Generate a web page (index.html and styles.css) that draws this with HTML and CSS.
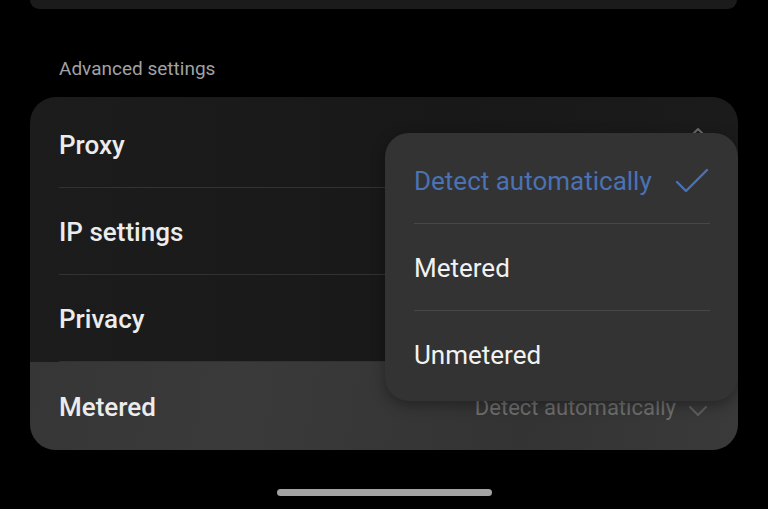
FILE: index.html
```html
<!DOCTYPE html>
<html lang="en">
<head>
    <meta charset="UTF-8">
    <meta name="viewport" content="width=device-width, initial-scale=1.0">
    <title>Advanced settings</title>
    <link rel="stylesheet" href="styles.css">
</head>
<body>

    <div class="screen">
        <!-- bottom of the card above -->
        <div class="top-card"></div>

        <div class="section-title">Advanced settings</div>

        <div class="card-wrap">
            <div class="card">
                <div class="row first">
                    <div class="row-inner">
                        <span class="row-title">Proxy</span>
                        <svg class="chevron" width="20" height="12" viewBox="0 0 20 12">
                            <path d="M2 10 L10 2 L18 10" fill="none" stroke="#6a6a6a" stroke-width="2" stroke-linecap="round" stroke-linejoin="round"/>
                        </svg>
                    </div>
                </div>
                <div class="row">
                    <div class="row-inner">
                        <span class="row-title">IP settings</span>
                    </div>
                </div>
                <div class="row">
                    <div class="row-inner">
                        <span class="row-title">Privacy</span>
                    </div>
                </div>
                <div class="row active last">
                    <div class="row-inner">
                        <span class="row-title">Metered</span>
                        <span class="row-value">Detect automatically</span>
                        <svg class="chevron" width="20" height="12" viewBox="0 0 20 12">
                            <path d="M2 2 L10 10 L18 2" fill="none" stroke="#5e5e5e" stroke-width="2" stroke-linecap="round" stroke-linejoin="round"/>
                        </svg>
                    </div>
                </div>
            </div>

            <!-- dropdown menu -->
            <div class="menu">
                <div class="menu-item selected">
                    <span>Detect automatically</span>
                    <svg width="34" height="26" viewBox="0 0 34 26">
                        <path d="M2 14 L11 23 L32 2" fill="none" stroke="#4a72b4" stroke-width="2.4" stroke-linecap="round" stroke-linejoin="round"/>
                    </svg>
                </div>
                <div class="menu-item">
                    <span>Metered</span>
                </div>
                <div class="menu-item last">
                    <span>Unmetered</span>
                </div>
            </div>
        </div>

        <div class="home-bar"></div>
    </div>

</body>
</html>
```

FILE: styles.css
```css
body {
    margin: 0;
    padding: 0;
    background-color: #000;
    font-family: Roboto, "Noto Sans", sans-serif;
}
.screen {
    width: 768px;
    height: 509px;
    padding: 0 30px;
    box-sizing: border-box;
    overflow: hidden;
}
.top-card {
    height: 9px;
    margin-right: 1px;
    background-color: #1b1b1b;
    border-radius: 0 0 26px 26px;
}
.section-title {
    padding: 47px 0 0 29px;
    height: 41px;
    font-size: 19px;
    line-height: 25px;
    color: #a2a2a2;
}
.card-wrap {
    position: relative;
}
.card {
    background: linear-gradient(90deg, #1c1c1c, #181818 60%, #1b1b1b);
    border-radius: 26px;
    overflow: hidden;
    padding-top: 4px;
}
.row {
    height: 87px;
}
.row-inner {
    height: 84px;
    padding-top: 2px;
    margin: 0 29px;
    border-bottom: 1px solid #323232;
    display: flex;
    align-items: center;
}
.row.last .row-inner {
    border-bottom: none;
    height: 86px;
}
.row.last {
    height: 88px;
}
.row.active {
    background: linear-gradient(100deg, #363636, #3a3a3a 30%, #333333 70%, #3a3a3a);
}
.row-title {
    flex: 1;
    font-size: 26px;
    font-weight: 500;
    color: #ececec;
}
.row-value {
    font-size: 22px;
    color: #6e6e6e;
    margin-right: 12px;
}
.chevron {
    margin-right: 1px;
}
.row.first .chevron {
    margin-top: -24px;
}
.row.active .chevron {
    margin-top: 8px;
}

/* menu */
.menu {
    position: absolute;
    top: 36px;
    right: 0;
    width: 353px;
    padding: 4px 0;
    background-color: #333333;
    border-radius: 24px;
    box-shadow: 0 4px 14px rgba(0, 0, 0, 0.35);
}
.menu-item {
    height: 84px;
    padding-top: 2px;
    margin: 0 28px 0 29px;
    border-bottom: 1px solid #474747;
    display: flex;
    align-items: center;
    justify-content: space-between;
    font-size: 26px;
    color: #f2f2f2;
}
.menu-item.last {
    border-bottom: none;
}
.menu-item.selected {
    color: #4a72b4;
}
.menu-item svg {
    margin-right: 1px;
}
.home-bar {
    width: 215px;
    height: 7px;
    margin: 39px auto 0;
    background-color: #a3a3a3;
    border-radius: 4px;
}
```
